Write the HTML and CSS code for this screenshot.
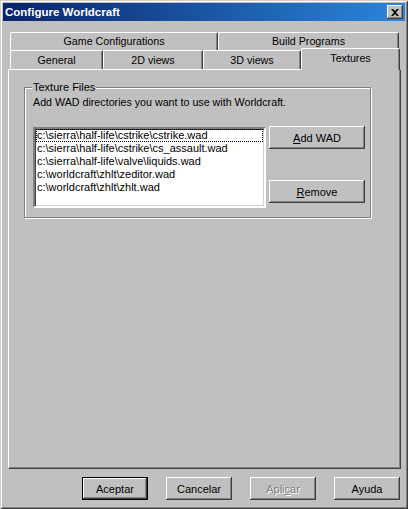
FILE: index.html
```html
<!DOCTYPE html>
<html lang="en">
<head>
  <meta charset="UTF-8" />
  <title>Configure Worldcraft</title>
  <link rel="stylesheet" href="styles.css">
</head>
<body>
  <div class="window">
    <div class="titlebar">
      <span class="title">Configure Worldcraft</span>
      <span class="close">
        <svg width="8" height="7" viewBox="0 0 8 7"><path d="M0 0h2l2 2 2-2h2L5 3.5 8 7H6L4 5 2 7H0l3-3.5z" fill="#000"/></svg>
      </span>
    </div>
    <div class="dialog">
      <div class="tabs">
        <div class="tab-row upper">
          <div class="tab t-game">Game Configurations</div>
          <div class="tab t-build">Build Programs</div>
        </div>
        <div class="tab-row lower">
          <div class="tab t-general">General</div>
          <div class="tab t-2d">2D views</div>
          <div class="tab t-3d">3D views</div>
          <div class="tab t-textures active">Textures</div>
        </div>
      </div>
      <div class="panel">
        <fieldset class="group">
          <legend>Texture Files</legend>
          <p class="hint">Add WAD directories you want to use with Worldcraft.</p>
          <div class="wad-row">
            <ul class="listbox">
              <li class="focused">c:\sierra\half-life\cstrike\cstrike.wad</li>
              <li>c:\sierra\half-life\cstrike\cs_assault.wad</li>
              <li>c:\sierra\half-life\valve\liquids.wad</li>
              <li>c:\worldcraft\zhlt\zeditor.wad</li>
              <li>c:\worldcraft\zhlt\zhlt.wad</li>
            </ul>
            <div class="side-buttons">
              <button class="btn"><u>A</u>dd WAD</button>
              <button class="btn remove"><u>R</u>emove</button>
            </div>
          </div>
        </fieldset>
      </div>
      <div class="footer">
        <button class="btn default">Aceptar</button>
        <button class="btn">Cancelar</button>
        <button class="btn disabled">Apli<u>c</u>ar</button>
        <button class="btn">Ayuda</button>
      </div>
    </div>
  </div>
</body>
</html>
```

FILE: styles.css
```css
* { box-sizing: border-box; }
body {
  margin: 0;
  font-family: "Liberation Sans", Arial, sans-serif;
  font-size: 11px;
  color: #000;
  background: #c0c0c0;
}
.window {
  width: 408px;
  height: 509px;
  padding: 3px;
  background: #c0c0c0;
  box-shadow: inset 1px 1px #d4d0c8, inset -1px -1px #404040,
              inset 2px 2px #fff, inset -2px -2px #808080;
}
.titlebar {
  height: 18px;
  display: flex;
  align-items: center;
  justify-content: space-between;
  padding: 0 2px 0 2px;
  background: linear-gradient(90deg, #0a246a, #2a86dc);
  color: #fff;
}
.title { font-weight: bold; font-size: 11.5px; }
.close {
  width: 16px;
  height: 14px;
  display: flex;
  align-items: center;
  justify-content: center;
  background: #c0c0c0;
  box-shadow: inset -1px -1px #404040, inset 1px 1px #fff, inset -2px -2px #808080;
}
.dialog { padding: 11px 4px 0 5px; }
.tabs { padding-left: 2px; font-size: 10.7px; }
.tab-row { display: flex; }
.tab-row.upper { height: 18px; }
.tab-row.lower { height: 19px; align-items: flex-start; }
.tab {
  height: 100%;
  display: flex;
  align-items: center;
  justify-content: center;
  background: #c0c0c0;
  border-top: 1px solid #fff;
  border-left: 1px solid #fff;
  border-right: 1px solid #404040;
  border-radius: 2px 2px 0 0;
  box-shadow: inset -1px 0 #808080;
  padding-bottom: 1px;
}
.t-game { width: 208px; }
.t-build { width: 181px; }
.t-general { width: 93px; }
.t-2d { width: 100px; }
.t-3d { width: 98px; }
.t-textures { width: 99px; }
.tab.active {
  height: 22px;
  margin-top: -2px;
  padding-bottom: 4px;
  position: relative;
  z-index: 1;
}
.panel {
  height: 400px;
  border-top: 1px solid #fff;
  border-left: 1px solid #fff;
  border-right: 1px solid #404040;
  border-bottom: 1px solid #404040;
  box-shadow: inset -1px -1px #808080;
  padding: 11px 0 0 15px;
}
.group {
  width: 347px;
  margin: 0;
  padding: 0 0 9px 8px;
  border: 1px solid #808080;
  box-shadow: inset 1px 1px #fff, 1px 1px #fff;
}
.group legend {
  padding: 0 1px;
  margin-left: -1px;
  line-height: 13px;
  background: #c0c0c0;
}
.hint { margin: 2px 0 0; line-height: 13px; font-size: 10.7px; }
.wad-row {
  display: flex;
  align-items: flex-start;
  gap: 3px;
  margin-top: 18px;
}
.listbox {
  width: 233px;
  height: 81px;
  margin: 0;
  padding: 0;
  list-style: none;
  background: #fff;
  border: 2px solid;
  border-color: #808080 #fff #fff #808080;
  box-shadow: inset 1px 1px #404040, inset -1px -1px #d4d0c8;
  padding: 0 1px;
}
.listbox li {
  line-height: 13px;
  padding-left: 1px;
  white-space: nowrap;
}
.listbox li.focused { outline: 1px dotted #000; outline-offset: -1px; }
.side-buttons {
  display: flex;
  flex-direction: column;
  margin-top: -1px;
}
.btn {
  font: inherit;
  color: #000;
  height: 23px;
  padding: 0;
  border: 0;
  background: #c0c0c0;
  box-shadow: inset -1px -1px #404040, inset 1px 1px #fff, inset -2px -2px #808080;
}
.side-buttons .btn { width: 96px; }
.side-buttons .remove { margin-top: 31px; }
.footer {
  display: flex;
  justify-content: flex-end;
  gap: 18px;
  margin-top: 8px;
  padding-right: 1px;
}
.footer .btn { width: 66px; }
.btn.default {
  border: 1px solid #000;
}
.btn.disabled {
  color: #808080;
  text-shadow: 1px 1px #fff;
}
```
